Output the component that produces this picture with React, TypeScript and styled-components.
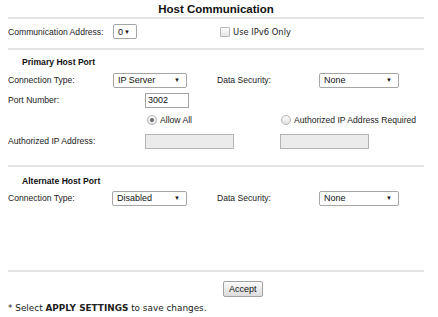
import React from "react";
import styled, { createGlobalStyle } from "styled-components";

const GlobalStyle = createGlobalStyle`
    html, body {
        margin: 0;
        padding: 0;
        background: #ffffff;
    }
    body {
        font-family: "Liberation Sans", Arial, sans-serif;
        color: #222222;
    }
`;

const Page = styled.div`
    width: 416px;
    padding: 0 0 0 8px;
    font-size: 8.6px;
`;

const Title = styled.h1`
    margin: 0;
    height: 17px;
    line-height: 19px;
    text-align: center;
    font-size: 11.5px;
    font-weight: bold;
    color: #111111;
    border-bottom: 2px solid #e4e4e4;
`;

const Divider = styled.div<{ $top?: number }>`
    height: 2px;
    margin-top: ${(p) => p.$top || 0}px;
    background: #e4e4e4;
`;

const Row = styled.div<{ $h: number; $top?: number }>`
    display: flex;
    align-items: center;
    height: ${(p) => p.$h}px;
    margin-top: ${(p) => p.$top || 0}px;
`;

const Label = styled.div<{ $w?: number }>`
    width: ${(p) => p.$w || 105}px;
    flex: none;
    white-space: nowrap;
`;

const Cell = styled.div<{ $w: number; $pad?: number }>`
    display: flex;
    align-items: center;
    width: ${(p) => p.$w}px;
    padding-left: ${(p) => p.$pad || 0}px;
    box-sizing: border-box;
    flex: none;
    white-space: nowrap;
`;

const Heading = styled.div<{ $pt: number; $h: number }>`
    padding: ${(p) => p.$pt}px 0 0 14px;
    height: ${(p) => p.$h}px;
    line-height: ${(p) => p.$h}px;
    font-weight: bold;
    font-size: 8.6px;
    color: #111111;
`;

const Select = styled.div<{ $w: number }>`
    display: flex;
    align-items: center;
    justify-content: space-between;
    width: ${(p) => p.$w}px;
    height: 15px;
    box-sizing: border-box;
    padding: 0 6px 0 4px;
    border: 1px solid #a6a6a6;
    border-radius: 2px;
    background: #ffffff;
    font-size: 9px;
    color: #111111;
`;

const Arrow = styled.span`
    font-size: 6px;
    color: #111111;
`;

const Input = styled.div<{ $w: number; $disabled?: boolean }>`
    width: ${(p) => p.$w}px;
    height: 15px;
    box-sizing: border-box;
    padding: 0 2px;
    line-height: 13px;
    border: 1px solid ${(p) => (p.$disabled ? "#b4b4b4" : "#a6a6a6")};
    background: ${(p) => (p.$disabled ? "#ebebeb" : "#ffffff")};
    font-size: 9px;
    color: #111111;
`;

const Check = styled.span`
    display: inline-block;
    width: 8px;
    height: 8px;
    margin-right: 3px;
    border: 1px solid #b8b8b8;
    border-radius: 1px;
    background: linear-gradient(#fdfdfd, #e6e6e6);
`;

const Radio = styled.span<{ $on?: boolean }>`
    display: inline-flex;
    align-items: center;
    justify-content: center;
    width: 8px;
    height: 8px;
    margin-right: 3px;
    border: 1px solid #b4b4b4;
    border-radius: 50%;
    background: linear-gradient(#fbfbfb, #e2e2e2);
    &::after {
        content: "";
        width: 4px;
        height: 4px;
        border-radius: 50%;
        background: ${(p) => (p.$on ? "#6a6a6a" : "transparent")};
    }
`;

const Verdana = styled.span`
    font-family: "DejaVu Sans", Verdana, sans-serif;
    font-size: 8.4px;
    color: #222222;
`;

const ButtonRow = styled.div`
    display: flex;
    padding-left: 215px;
    margin-top: 9px;
`;

const Button = styled.button`
    height: 16px;
    padding: 0 5px;
    border: 1px solid #a3a3a3;
    border-radius: 2px;
    background: linear-gradient(#fafafa, #dcdcdc);
    font-family: "Liberation Sans", Arial, sans-serif;
    font-size: 9px;
    color: #111111;
    line-height: 14px;
`;

const Footer = styled.div`
    height: 22px;
    line-height: 22px;
    font-family: "DejaVu Sans", Verdana, sans-serif;
    font-size: 8.9px;
    color: #222222;
`;

const App: React.FC = () => {
    return (
        <Page>
            <GlobalStyle />
            <Title>Host Communication</Title>

            <Row $h={25}>
                <Label>Communication Address:</Label>
                <Cell $w={107}>
                    <Select $w={24}>
                        0 <Arrow>▼</Arrow>
                    </Select>
                </Cell>
                <Cell $w={150}>
                    <Check />
                    <Verdana>Use IPv6 Only</Verdana>
                </Cell>
            </Row>
            <Divider $top={4} />

            <Heading $pt={4} $h={16}>Primary Host Port</Heading>
            <Row $h={20}>
                <Label>Connection Type:</Label>
                <Cell $w={104}>
                    <Select $w={74}>
                        IP Server <Arrow>▼</Arrow>
                    </Select>
                </Cell>
                <Cell $w={102}>Data Security:</Cell>
                <Select $w={80}>
                    None <Arrow>▼</Arrow>
                </Select>
            </Row>
            <Row $h={20}>
                <Label>Port Number:</Label>
                <Cell $w={104} $pad={32}>
                    <Input $w={44}>3002</Input>
                </Cell>
            </Row>
            <Row $h={20}>
                <Label />
                <Cell $w={168} $pad={34}>
                    <Radio $on />
                    Allow All
                </Cell>
                <Cell $w={140}>
                    <Radio />
                    Authorized IP Address Required
                </Cell>
            </Row>
            <Row $h={22}>
                <Label>Authorized IP Address:</Label>
                <Cell $w={167} $pad={32}>
                    <Input $w={89} $disabled />
                </Cell>
                <Input $w={89} $disabled />
            </Row>
            <Divider $top={13} />

            <Heading $pt={7} $h={14}>Alternate Host Port</Heading>
            <Row $h={20}>
                <Label $w={104}>Connection Type:</Label>
                <Cell $w={105}>
                    <Select $w={75}>
                        Disabled <Arrow>▼</Arrow>
                    </Select>
                </Cell>
                <Cell $w={102}>Data Security:</Cell>
                <Select $w={80}>
                    None <Arrow>▼</Arrow>
                </Select>
            </Row>
            <Divider $top={62} />

            <ButtonRow>
                <Button>Accept</Button>
            </ButtonRow>
            <Footer>
                * Select <b>APPLY SETTINGS</b> to save changes.
            </Footer>
        </Page>
    );
};

export default App;
